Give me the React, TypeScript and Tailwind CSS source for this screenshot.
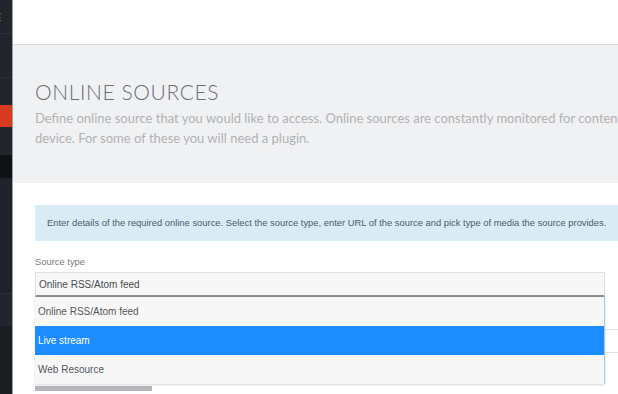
import React from "react";

export default function App() {
  return (
    <div className="flex h-[394px] w-[618px] overflow-hidden bg-white" style={{ fontFamily: '"Liberation Sans", Arial, sans-serif' }}>
      {/* Sidebar */}
      <div className="flex w-[12px] shrink-0 flex-col overflow-hidden bg-[#22252c]">
        <div className="flex h-[34px] items-start border-b border-[#2c3038] pt-[11px]">
          <span className="ml-[-6px] text-[11px] leading-[12px] text-[#8a8f99]">E</span>
        </div>
        <div className="h-[44px] border-b border-[#2c3038]" />
        <div className="h-[27px]" />
        <div className="h-[22px] bg-[#d63b1f]" />
        <div className="h-[28px] bg-[#22252b]" />
        <div className="h-[23px] bg-[#0f1114]" />
        <div className="h-[116px] border-b border-[#2d3139] bg-[#1f222a]" />
        <div className="h-[32px] bg-[#22252d]" />
        <div className="flex-1 bg-[#1b1e21]" />
      </div>
      <div className="w-px shrink-0 bg-[#9a9da2]" />

      {/* Main */}
      <div className="flex min-w-0 flex-1 flex-col">
        <div className="h-[45px] shrink-0 border-b border-[#d9dbdd] bg-white" />
        <div className="h-[138px] shrink-0 bg-[#f0f1f2] pl-[22px] pt-[34px]" style={{ fontFamily: 'Lato, "Noto Sans", sans-serif' }}>
          <h1 className="whitespace-nowrap text-[21px] font-light leading-[26px] tracking-[0.6px] text-[#6b6e72]">ONLINE SOURCES</h1>
          <div className="mt-[3px] text-[13px] leading-[20px] text-[#b0b2b5]">
            <div className="whitespace-nowrap">Define online source that you would like to access. Online sources are constantly monitored for content on the</div>
            <div className="whitespace-nowrap">device. For some of these you will need a plugin.</div>
          </div>
        </div>
        <div className="flex-1 bg-white pl-[22px] pt-[22px]">
          <div className="flex h-[36px] w-[620px] items-center bg-[#d9ecf6] pl-[12px]">
            <span className="whitespace-nowrap text-[9.4px] text-[#4a5d68]">
              Enter details of the required online source. Select the source type, enter URL of the source and pick type of media the source provides.
            </span>
          </div>
          <div className="mt-[15px] text-[9.4px] leading-[12px] text-[#77797c]">Source type</div>
          <div className="relative mt-[4px] w-[570px]">
            <div className="flex h-[25px] items-center border border-[#dedfe0] border-b-2 border-b-[#8e9194] bg-[#f7f7f7] pl-[3px] text-[10px] text-[#4a4c4f]">
              Online RSS/Atom feed
            </div>
            {/* content behind the open list */}
            <div className="mt-[32px] flex h-[24px] w-[600px] border-y border-[#e2e3e4]" />
            <div className="mt-[33px] h-[5px] w-[117px] bg-[#b4b6b9]" />
            {/* dropdown */}
            <div className="absolute left-0 top-[25px] w-[570px] border-r border-[#a9c8ec] bg-[#f7f7f8] text-[10px] shadow-[0_1px_2px_rgba(0,0,0,0.15)]">
              <div className="flex h-[29px] items-center pl-[3px] text-[#55575a]">Online RSS/Atom feed</div>
              <div className="flex h-[29px] items-center bg-[#1c8cff] pl-[3px] text-white">Live stream</div>
              <div className="flex h-[29px] items-center pl-[3px] text-[#55575a]">Web Resource</div>
            </div>
          </div>
        </div>
      </div>
    </div>
  );
}
